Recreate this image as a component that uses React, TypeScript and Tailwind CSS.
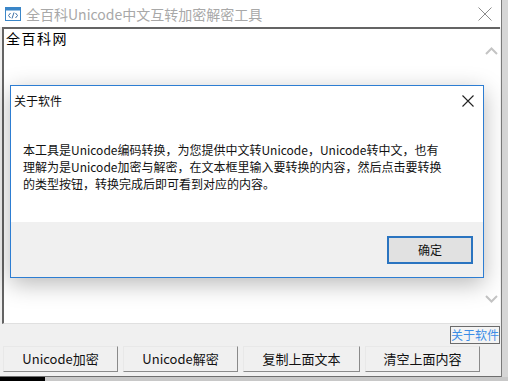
import React from "react";

const font = { fontFamily: '"Noto Sans CJK SC", "Noto Sans", sans-serif' };

function AppIcon() {
  return (
    <svg width="16" height="16" viewBox="0 0 16 16">
      <rect x="0.5" y="1.5" width="15" height="13" fill="#ffffff" stroke="#3a86c8" />
      <rect x="1" y="2" width="14" height="2.5" fill="#3a86c8" />
      <path d="M5.5 7 L3.5 9.5 L5.5 12" stroke="#3a6ea5" strokeWidth="1" fill="none" />
      <path d="M10.5 7 L12.5 9.5 L10.5 12" stroke="#3a6ea5" strokeWidth="1" fill="none" />
      <path d="M9 6.5 L7 12.5" stroke="#3a6ea5" strokeWidth="1" fill="none" />
    </svg>
  );
}

function CloseX({ size, color, sw }: { size: number; color: string; sw: number }) {
  return (
    <svg width={size} height={size} viewBox={`0 0 ${size} ${size}`}>
      <path d={`M0.5 0.5 L${size - 0.5} ${size - 0.5} M${size - 0.5} 0.5 L0.5 ${size - 0.5}`} stroke={color} strokeWidth={sw} />
    </svg>
  );
}

function Btn({ label, w }: { label: string; w: string }) {
  return (
    <div
      className={`${w} h-[26px] flex items-center justify-center bg-[#f0f0f0] border border-t-[#e8e8e8] border-l-[#e8e8e8] border-r-[#8a8a8a] border-b-[#8a8a8a] text-[13px] text-[#111]`}
      style={font}
    >
      {label}
    </div>
  );
}

export default function App() {
  return (
    <div className="w-[508px] h-[381px] flex flex-col bg-[#bdbdbd] overflow-hidden" style={font}>
      <div className="flex flex-1 min-h-0">
        {/* main window */}
        <div className="relative w-[502px] flex flex-col bg-[#f0f0f0] border-r border-[#7a7a7a]">
          {/* title bar */}
          <div className="h-[27px] bg-white flex items-center pl-[5px] pr-[8px] shrink-0">
            <AppIcon />
            <div className="ml-[5px] text-[14px] text-[#a8a8a8] leading-none">全百科Unicode中文互转加密解密工具</div>
            <div className="ml-auto mr-[1px]">
              <CloseX size={14} color="#8c8c8c" sw={1} />
            </div>
          </div>
          {/* textarea */}
          <div className="ml-[2px] mr-[1px] h-[297px] flex bg-white border-t-2 border-l-2 border-t-[#646464] border-l-[#646464] border-b border-b-[#e0e0e0] shrink-0">
            <div className="flex-1 pl-[2px] pt-[1px] text-[14px] leading-[16px] tracking-[1.5px] text-black" style={{ fontFamily: '"Noto Sans CJK SC", sans-serif' }}>
              全百科网
            </div>
            <div className="w-[17px] flex flex-col items-center justify-between pt-[18px] pb-[20px] bg-white">
              <svg width="13" height="8" viewBox="0 0 13 8">
                <path d="M1 7 L6.5 1.5 L12 7" stroke="#c4c4c4" strokeWidth="2" fill="none" />
              </svg>
              <svg width="13" height="8" viewBox="0 0 13 8">
                <path d="M1 1 L6.5 6.5 L12 1" stroke="#c4c4c4" strokeWidth="2" fill="none" />
              </svg>
            </div>
          </div>
          {/* link row */}
          <div className="h-[22px] flex justify-end items-center pr-[1px] shrink-0">
            <div className="w-[50px] h-[18px] flex items-center justify-center border border-[#6b6b6b] text-[12px] leading-none text-[#3d8ee6] bg-[#f4f4f4]">关于软件</div>
          </div>
          {/* buttons */}
          <div className="flex gap-[5px] pl-[3px] shrink-0">
            <Btn label="Unicode加密" w="w-[115px]" />
            <Btn label="Unicode解密" w="w-[115px]" />
            <Btn label="复制上面文本" w="w-[117px]" />
            <Btn label="清空上面内容" w="w-[115px]" />
          </div>
          <div className="flex-1 border-b border-[#6e6e6e]" />

          {/* dialog */}
          <div className="absolute left-[10px] top-[85px] w-[474px] h-[193px] flex flex-col border border-[#2d7dd2] bg-white shadow-[0_6px_22px_rgba(0,0,0,0.28)]">
            <div className="h-[29px] flex items-center pl-[3px] pr-[9px] text-[12px] text-[#111] shrink-0">
              <span>关于软件</span>
              <div className="ml-auto">
                <CloseX size={12} color="#222" sw={1.1} />
              </div>
            </div>
            <div className="flex-1 pl-[12px] pt-[26px] text-[12px] leading-[17px] text-[#111]">
              <div>本工具是Unicode编码转换，为您提供中文转Unicode，Unicode转中文，也有</div>
              <div>理解为是Unicode加密与解密，在文本框里输入要转换的内容，然后点击要转换</div>
              <div>的类型按钮，转换完成后即可看到对应的内容。</div>
            </div>
            <div className="h-[55px] bg-[#f0f0f0] flex items-center justify-end pr-[10px] shrink-0">
              <div className="w-[86px] h-[28px] flex items-center justify-center border-2 border-[#2a74c0] bg-[#e1e1e1] text-[12px] text-[#111]">
                确定
              </div>
            </div>
          </div>
        </div>
        {/* desktop strip */}
        <div className="flex-1 bg-[#d6d6d6]" />
      </div>
      <div className="h-[4px] flex shrink-0">
        <div className="w-[45px] bg-black" />
        <div className="flex-1 bg-[#c8c8c8]" />
      </div>
    </div>
  );
}
